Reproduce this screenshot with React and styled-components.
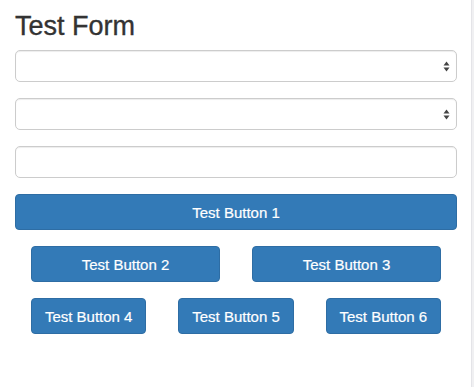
import React from "react";
import styled, { createGlobalStyle } from "styled-components";

const Global = createGlobalStyle`
  html, body { margin: 0; padding: 0; background: #fff; }
  body { font-family: "Liberation Sans", Arial, Helvetica, sans-serif; color: #333; }
  * { box-sizing: border-box; }
`;

const Page = styled.div`
  display: flex;
  width: 474px;
  min-height: 387px;
`;

const Main = styled.main`
  flex: 1;
  padding: 11px 14px 0 15px;
`;

const Strip = styled.div`
  width: 3px;
  background: #f0f0f2;
  border-left: 1px solid #e4e4e8;
`;

const Title = styled.h1`
  margin: 0 0 9px;
  font-size: 27px;
  line-height: 30px;
  font-weight: 500;
  color: #333;
  -webkit-text-stroke: 0.35px #333;
`;

const Form = styled.form`
  display: flex;
  flex-direction: column;
  gap: 16px;
`;

const Field = styled.div`
  position: relative;
  height: 32px;
  border: 1px solid #cccccc;
  border-radius: 5px;
  background: #fff;
  box-shadow: inset 0 1px 1px rgba(0, 0, 0, 0.075);
`;

const Arrows = styled.svg`
  position: absolute;
  right: 6px;
  top: 10px;
`;

const Row = styled.div`
  display: grid;
  grid-template-columns: repeat(${(p) => p.$cols}, 1fr);
`;

const Col = styled.div`
  padding: 0 16px;
`;

const Button = styled.button`
  display: block;
  width: 100%;
  height: 36px;
  padding: 0;
  border: 1px solid #2e6da4;
  border-radius: 4px;
  background: #337ab7;
  color: #fff;
  font-family: inherit;
  font-size: 15px;
  -webkit-text-stroke: 0.2px #fff;
  cursor: pointer;
`;

const SelectField = () => (
  <Field>
    <Arrows width="7" height="11" viewBox="0 0 7 11">
      <path d="M3.5 0.5 L6.5 4.5 L0.5 4.5 Z" fill="#444" />
      <path d="M3.5 10.5 L6.5 6.5 L0.5 6.5 Z" fill="#444" />
    </Arrows>
  </Field>
);

export default function App() {
  return (
    <>
      <Global />
      <Page>
        <Main>
          <Title>Test Form</Title>
          <Form onSubmit={(e) => e.preventDefault()}>
            <SelectField />
            <SelectField />
            <Field />
            <Button type="button">Test Button 1</Button>
            <Row $cols={2}>
              <Col><Button type="button">Test Button 2</Button></Col>
              <Col><Button type="button">Test Button 3</Button></Col>
            </Row>
            <Row $cols={3}>
              <Col><Button type="button">Test Button 4</Button></Col>
              <Col><Button type="button">Test Button 5</Button></Col>
              <Col><Button type="button">Test Button 6</Button></Col>
            </Row>
          </Form>
        </Main>
        <Strip />
      </Page>
    </>
  );
}
